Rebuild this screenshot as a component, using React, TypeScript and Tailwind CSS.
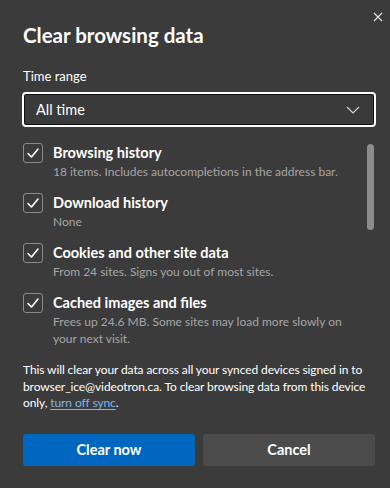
import React from "react";

const items = [
  { title: "Browsing history", sub: "18 items. Includes autocompletions in the address bar." },
  { title: "Download history", sub: "None" },
  { title: "Cookies and other site data", sub: "From 24 sites. Signs you out of most sites." },
  {
    title: "Cached images and files",
    sub: "Frees up 24.6 MB. Some sites may load more slowly on your next visit.",
  },
];

const Check = () => (
  <div className="w-[20px] h-[20px] shrink-0 rounded-[3px] border border-[#8a8a8a] flex items-center justify-center">
    <svg width="14" height="14" viewBox="0 0 14 14" fill="none">
      <path d="M2 7.5 L5.5 11 L12 3" stroke="white" strokeWidth="1.6" strokeLinecap="round" strokeLinejoin="round" />
    </svg>
  </div>
);

const App: React.FC = () => {
  return (
    <div
      className="relative w-[390px] h-[488px] bg-[#3b3b3b] text-white pl-[23px] pr-[15px] pt-[21px] overflow-hidden"
      style={{ fontFamily: 'Lato, "Noto Sans", sans-serif' }}
    >
      <button className="absolute top-[11px] right-[6px] w-[12px] h-[12px] flex items-center justify-center">
        <svg width="10" height="10" viewBox="0 0 10 10">
          <path d="M1 1 L9 9 M9 1 L1 9" stroke="#e0e0e0" strokeWidth="1.2" />
        </svg>
      </button>

      <h1 className="text-[20.5px] font-bold leading-[28px]">Clear browsing data</h1>

      <div className="mt-[18px] text-[13px] leading-[18px]">Time range</div>

      <div className="mt-[7px] h-[35px] rounded-[4px] border-2 border-white shadow-[inset_0_0_0_1px_#111] bg-[#3a3a3a] flex items-center justify-between pl-[12px] pr-[14px] -mx-[1px]">
        <span className="text-[14.5px]">All time</span>
        <svg width="14" height="8" viewBox="0 0 14 8" fill="none">
          <path d="M1 1 L7 7 L13 1" stroke="#cfcfcf" strokeWidth="1.2" />
        </svg>
      </div>

      <div className="mt-[16px] flex gap-[12px] mr-[1px]">
        <div className="flex-1 flex flex-col gap-[13px]">
          {items.map((it) => (
            <div key={it.title} className="flex gap-[10px]">
              <Check />
              <div className="flex-1">
                <div className="text-[14.5px] font-bold leading-[20px]">{it.title}</div>
                <div className="text-[12px] leading-[17px] text-[#a6a6a6]">{it.sub}</div>
              </div>
            </div>
          ))}
        </div>
        <div className="w-[7px] shrink-0 pt-[1px]">
          <div className="w-[7px] h-[86px] rounded-full bg-[#8c8c8c]" />
        </div>
      </div>

      <p className="mt-[15px] text-[12px] leading-[16.5px] tracking-[-0.1px]">
        This will clear your data across all your synced devices signed in to browser_ice@videotron.ca. To clear
        browsing data from this device only,{" "}
        <a className="text-[#7fb6e6] underline underline-offset-2 decoration-[#7fb6e6]">turn off sync</a>.
      </p>

      <div className="mt-[22px] grid grid-cols-2 gap-[8px]">
        <button className="h-[32px] rounded-[3px] bg-[#0067c0] text-[14.5px] font-bold">Clear now</button>
        <button className="h-[32px] rounded-[3px] bg-[#4b4b4b] text-[14.5px] font-bold">Cancel</button>
      </div>
    </div>
  );
};

export default App;
